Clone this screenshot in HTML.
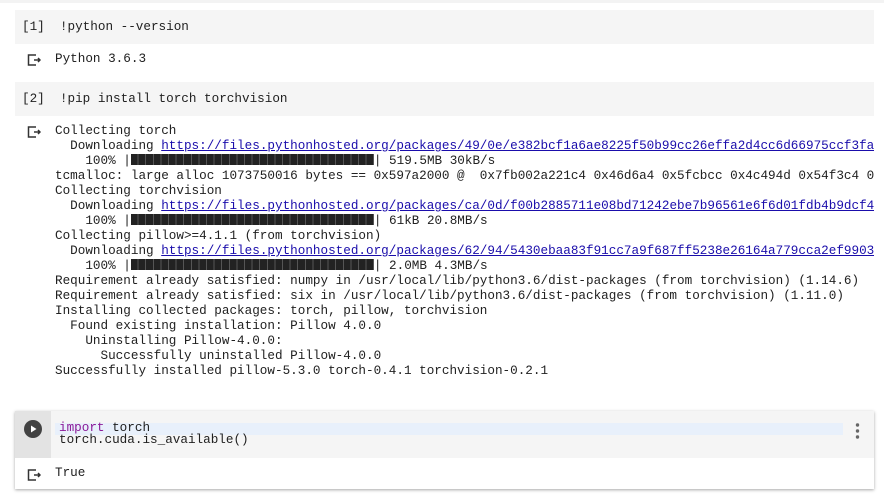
<!DOCTYPE html>
<html><head><style>
body{margin:0;width:884px;height:500px;background:#fff;position:relative;overflow:hidden;font-family:"Liberation Mono",monospace;font-size:12.65px;color:#212121}
.top{position:absolute;left:0;top:0;width:884px;height:3px;background:#f3f3f3}
.cell{position:absolute;left:15px;width:859px;height:34px;background:#f5f5f5}
.t{position:absolute;white-space:pre;line-height:15px}
.out{position:absolute;left:55px;width:819px;overflow:hidden;white-space:pre;line-height:15px}
a{color:#1a0dab;text-decoration:underline}
.bar{display:inline-block;width:243px;height:11px;vertical-align:-1px;background:repeating-linear-gradient(90deg,#222 0,#222 6.6px,#555 6.6px,#555 7.6px)}
.ic{position:absolute;left:27px}
.card{position:absolute;left:15px;top:411px;width:859px;height:78px;background:#fff;box-shadow:0 1px 3px rgba(0,0,0,.35)}
</style></head><body>
<div class="top"></div>
<div class="cell" style="top:10px"></div>
<div class="t" style="left:22px;top:19px">[1]  !python --version</div>
<svg class="ic" style="top:53px" width="14" height="14" viewBox="0 0 14 14"><path d="M9 2H1.5v10H9M7 7h6M11 5l2 2-2 2" stroke="#333" stroke-width="1.5" fill="none"/></svg>
<div class="t" style="left:55px;top:51px">Python 3.6.3</div>
<div class="cell" style="top:82px"></div>
<div class="t" style="left:22px;top:91px">[2]  !pip install torch torchvision</div>
<svg class="ic" style="top:125px" width="14" height="14" viewBox="0 0 14 14"><path d="M9 2H1.5v10H9M7 7h6M11 5l2 2-2 2" stroke="#333" stroke-width="1.5" fill="none"/></svg>
<div class="out" style="top:123px">Collecting torch
  Downloading <a>https://files.pythonhosted.org/packages/49/0e/e382bcf1a6ae8225f50b99cc26effa2d4cc6d66975ccf3fa</a>
    100% |<span class="bar"></span>| 519.5MB 30kB/s
tcmalloc: large alloc 1073750016 bytes == 0x597a2000 @  0x7fb002a221c4 0x46d6a4 0x5fcbcc 0x4c494d 0x54f3c4 0x
Collecting torchvision
  Downloading <a>https://files.pythonhosted.org/packages/ca/0d/f00b2885711e08bd71242ebe7b96561e6f6d01fdb4b9dcf4</a>
    100% |<span class="bar"></span>| 61kB 20.8MB/s
Collecting pillow>=4.1.1 (from torchvision)
  Downloading <a>https://files.pythonhosted.org/packages/62/94/5430ebaa83f91cc7a9f687ff5238e26164a779cca2ef9903</a>
    100% |<span class="bar"></span>| 2.0MB 4.3MB/s
Requirement already satisfied: numpy in /usr/local/lib/python3.6/dist-packages (from torchvision) (1.14.6)
Requirement already satisfied: six in /usr/local/lib/python3.6/dist-packages (from torchvision) (1.11.0)
Installing collected packages: torch, pillow, torchvision
  Found existing installation: Pillow 4.0.0
    Uninstalling Pillow-4.0.0:
      Successfully uninstalled Pillow-4.0.0
Successfully installed pillow-5.3.0 torch-0.4.1 torchvision-0.2.1</div>
<div class="card">
  <div style="position:absolute;left:0;top:0;width:859px;height:47px;background:#f5f5f5"></div>
  <div style="position:absolute;left:0;top:0;width:36px;height:47px;background:#e3e3e3"></div>
  <svg style="position:absolute;left:9px;top:9px" width="18" height="18" viewBox="0 0 18 18"><circle cx="9" cy="9" r="9" fill="#424242"/><path d="M7 5.5v7l5.5-3.5z" fill="#fff"/></svg>
  <div style="position:absolute;left:40px;top:12px;width:788px;height:12px;background:#e8f0fb"></div>
  <div class="t" style="left:44px;top:11px;line-height:12px"><span style="color:#8b1a98">import</span> torch
torch.cuda.is_available()</div>
  <svg style="position:absolute;left:840px;top:12px" width="5" height="16"><circle cx="2.5" cy="2" r="1.7" fill="#666"/><circle cx="2.5" cy="8" r="1.7" fill="#666"/><circle cx="2.5" cy="14" r="1.7" fill="#666"/></svg>
  <svg style="position:absolute;left:12px;top:57px" width="14" height="14" viewBox="0 0 14 14"><path d="M9 2H1.5v10H9M7 7h6M11 5l2 2-2 2" stroke="#333" stroke-width="1.5" fill="none"/></svg>
  <div class="t" style="left:40px;top:54px">True</div>
</div>
</body></html>
